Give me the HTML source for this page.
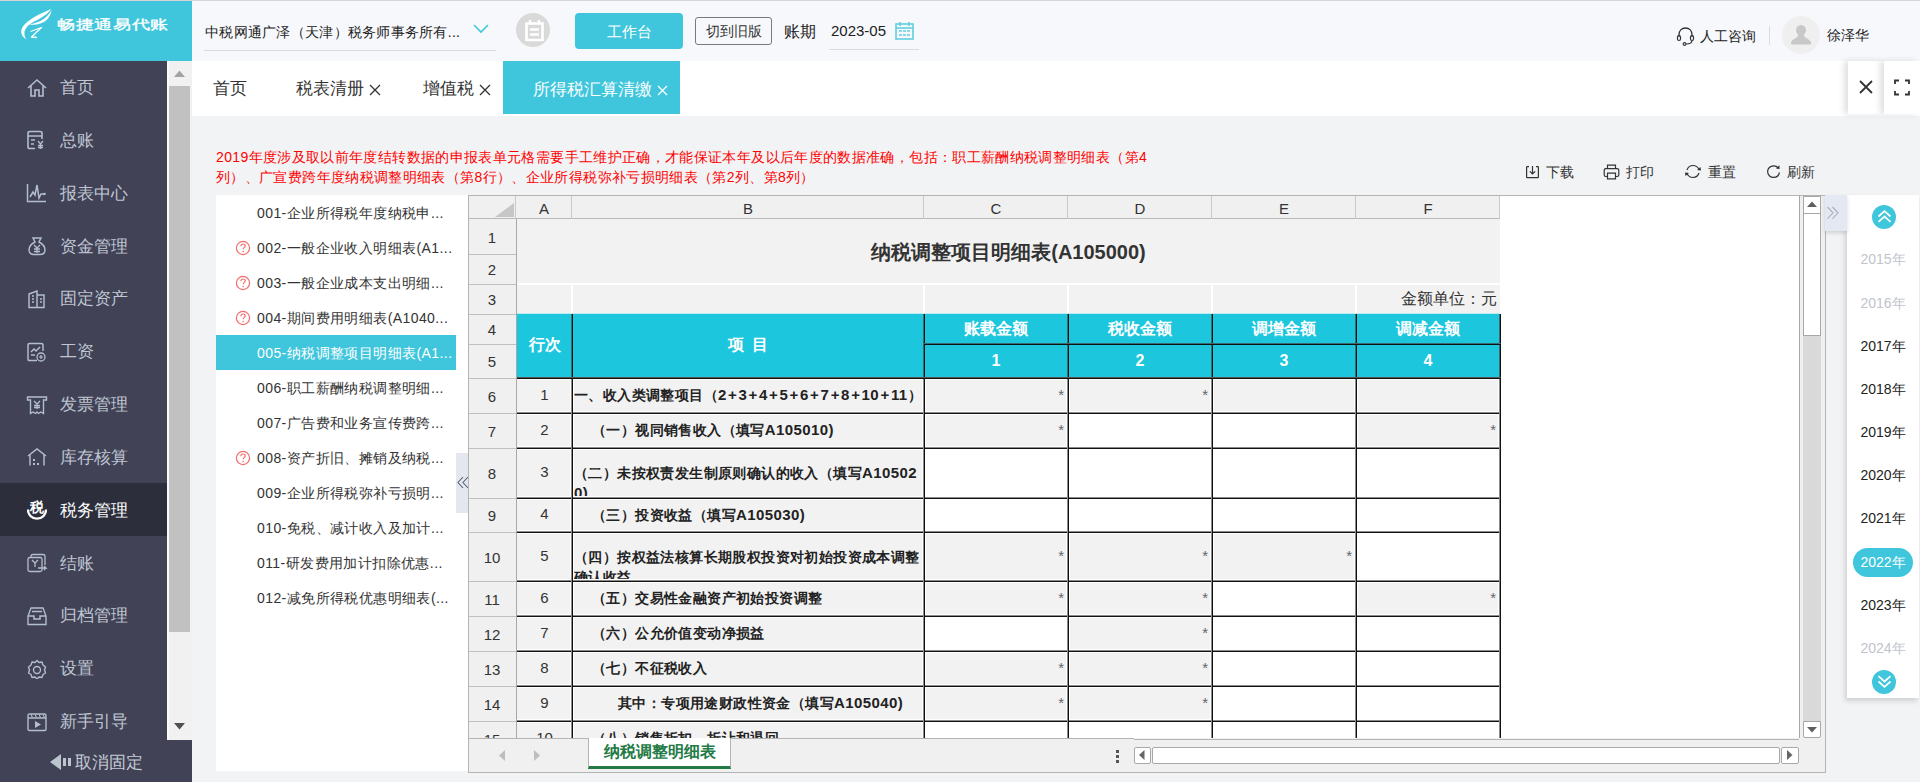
<!DOCTYPE html>
<html><head><meta charset="utf-8"><style>
html,body{margin:0;padding:0;width:1920px;height:782px;overflow:hidden;position:relative;font-family:'Liberation Sans',sans-serif;}
div{box-sizing:content-box}
svg{display:block}
</style></head><body>
<div style="position:absolute;left:0px;top:0px;width:1920px;height:782px;background:#f2f3f5"></div>
<div style="position:absolute;left:0px;top:0px;width:1920px;height:61px;background:#f7f8fc"></div>
<div style="position:absolute;left:0px;top:0px;width:1920px;height:1px;background:#d6d6d6"></div>
<div style="position:absolute;left:0px;top:1px;width:192px;height:60px;background:#40c6dc"></div>
<svg style="position:absolute;left:0px;top:0px" width="60" height="45" viewBox="0 0 60 45"><path d="M51.2 8.9 C44 12 32 17 25 24 C20 29 19.5 35 26.4 39.6 C23 34 24 29 29 25 C35 20 46 17 51.2 8.9 Z" fill="#fff"/><path d="M51.5 10 C50.5 19 43 26 29 24.5 C40 22.5 47.5 18 51.5 10 Z" fill="#fff"/><path d="M30.5 31.5 L41.5 27.5 L31.5 37 L37 37.5" stroke="#fff" stroke-width="1.3" fill="none" stroke-linejoin="round"/></svg>
<div style="position:absolute;left:57px;top:13.30px;font-size:18px;line-height:24px;color:#fff;font-weight:normal;white-space:nowrap;transform:scaleY(0.72);transform-origin:0 50%;letter-spacing:0.7px;-webkit-text-stroke:0.5px #fff">畅捷通易代账</div>
<div style="position:absolute;left:205px;top:22.00px;font-size:14px;line-height:20px;color:#222;font-weight:normal;white-space:nowrap;letter-spacing:0.28px">中税网通广泽（天津）税务师事务所有...</div>
<svg style="position:absolute;left:473px;top:24px" width="16" height="10" viewBox="0 0 16 10"><path d="M1 1 L8 8 L15 1" stroke="#40c6dc" stroke-width="1.6" fill="none"/></svg>
<div style="position:absolute;left:204px;top:50px;width:292px;height:1px;background:#d9dbe0"></div>
<div style="position:absolute;left:516px;top:13px;width:34px;height:34px;border-radius:50%;background:#d9d9d9"></div>
<svg style="position:absolute;left:524px;top:19px" width="21" height="23" viewBox="0 0 21 23"><path d="M2.5 4.5 H18.5 V21 H2.5 Z" stroke="#fff" stroke-width="2.6" fill="none"/><path d="M6 1 V5 M15 1 V5" stroke="#fff" stroke-width="2.4"/><path d="M6 10.5 H15 M6 15.5 H15" stroke="#fff" stroke-width="2.4"/></svg>
<div style="position:absolute;left:575px;top:13px;width:108px;height:36px;border-radius:4px;background:#40c6dc"></div>
<div style="position:absolute;left:575px;width:108px;text-align:center;top:20.50px;font-size:15px;line-height:21px;color:#fff;font-weight:normal;white-space:nowrap;">工作台</div>
<div style="position:absolute;left:695px;top:17px;width:75px;height:26px;border-radius:3px;border:1px solid #7a7a7a;background:transparent"></div>
<div style="position:absolute;left:695px;width:77px;text-align:center;top:21.00px;font-size:14px;line-height:20px;color:#333;font-weight:normal;white-space:nowrap;">切到旧版</div>
<div style="position:absolute;left:784px;top:21.00px;font-size:16px;line-height:22px;color:#222;font-weight:normal;white-space:nowrap;">账期</div>
<div style="position:absolute;left:831px;top:20.00px;font-size:15px;line-height:21px;color:#222;font-weight:normal;white-space:nowrap;">2023-05</div>
<svg style="position:absolute;left:895px;top:21px" width="19" height="19" viewBox="0 0 19 19"><rect x="1" y="3" width="17" height="15" fill="none" stroke="#5fcfe0" stroke-width="1.6"/><path d="M5 1 V5 M14 1 V5" stroke="#5fcfe0" stroke-width="1.6"/><path d="M1 7 H18" stroke="#5fcfe0" stroke-width="1.6"/><path d="M4 10 H7 M8 10 H11 M12 10 H15 M4 14 H7 M8 14 H11 M12 14 H15" stroke="#5fcfe0" stroke-width="1.4"/></svg>
<div style="position:absolute;left:829px;top:49px;width:90px;height:1px;background:#d9dbe0"></div>
<svg style="position:absolute;left:1676px;top:26px" width="19" height="20" viewBox="0 0 19 20"><path d="M3 11 V9 C3 4.5 6 2 9.5 2 C13 2 16 4.5 16 9 V11" stroke="#333" stroke-width="1.3" fill="none"/><rect x="1.5" y="9.5" width="3" height="5" rx="1.5" fill="none" stroke="#333" stroke-width="1.2"/><rect x="14.5" y="9.5" width="3" height="5" rx="1.5" fill="none" stroke="#333" stroke-width="1.2"/><path d="M16 14.5 C16 17 13 18 10 18" stroke="#333" stroke-width="1.2" fill="none"/><circle cx="8.5" cy="18" r="1.4" fill="none" stroke="#333" stroke-width="1.1"/></svg>
<div style="position:absolute;left:1700px;top:25.50px;font-size:14px;line-height:20px;color:#222;font-weight:normal;white-space:nowrap;">人工咨询</div>
<div style="position:absolute;left:1769px;top:26px;width:1px;height:19px;background:#dcdcdc"></div>
<div style="position:absolute;left:1782px;top:16px;width:38px;height:38px;border-radius:50%;background:#efefef"></div>
<svg style="position:absolute;left:1790px;top:24px" width="22" height="22" viewBox="0 0 22 22"><ellipse cx="11" cy="6.3" rx="5" ry="5.4" fill="#c8c8c8"/><path d="M8 10.5 H14 L14.5 13 C17.5 14.8 21 16.5 21 19 C21 20.2 20.5 20.6 19.5 20.6 H2.5 C1.5 20.6 1 20.2 1 19 C1 16.5 4.5 14.8 7.5 13 Z" fill="#c8c8c8"/></svg>
<div style="position:absolute;left:1827px;top:25.00px;font-size:14px;line-height:20px;color:#222;font-weight:normal;white-space:nowrap;">徐泽华</div>
<div style="position:absolute;left:0px;top:61px;width:167px;height:679px;background:#424257"></div>
<div style="position:absolute;left:0px;top:740px;width:192px;height:42px;background:#424257"></div>
<div style="position:absolute;left:167px;top:61px;width:25px;height:679px;background:#f1f1f1"></div>
<div style="position:absolute;left:167px;top:61px;width:2px;height:679px;background:#fafafa"></div>
<div style="position:absolute;left:169px;top:86px;width:21px;height:546px;background:#c1c1c1"></div>
<svg style="position:absolute;left:174px;top:70px" width="11" height="7" viewBox="0 0 11 7"><path d="M0 7 L5.5 0.5 L11 7 Z" fill="#a3a3a3"/></svg>
<svg style="position:absolute;left:174px;top:723px" width="11" height="7" viewBox="0 0 11 7"><path d="M0 0 L5.5 6.5 L11 0 Z" fill="#505050"/></svg>
<div style="position:absolute;left:60px;top:76.10px;font-size:17px;line-height:23px;color:#bfc7d2;font-weight:normal;white-space:nowrap;">首页</div>
<div style="position:absolute;left:60px;top:128.93px;font-size:17px;line-height:23px;color:#bfc7d2;font-weight:normal;white-space:nowrap;">总账</div>
<div style="position:absolute;left:60px;top:181.76px;font-size:17px;line-height:23px;color:#bfc7d2;font-weight:normal;white-space:nowrap;">报表中心</div>
<div style="position:absolute;left:60px;top:234.59px;font-size:17px;line-height:23px;color:#bfc7d2;font-weight:normal;white-space:nowrap;">资金管理</div>
<div style="position:absolute;left:60px;top:287.42px;font-size:17px;line-height:23px;color:#bfc7d2;font-weight:normal;white-space:nowrap;">固定资产</div>
<div style="position:absolute;left:60px;top:340.25px;font-size:17px;line-height:23px;color:#bfc7d2;font-weight:normal;white-space:nowrap;">工资</div>
<div style="position:absolute;left:60px;top:393.08px;font-size:17px;line-height:23px;color:#bfc7d2;font-weight:normal;white-space:nowrap;">发票管理</div>
<div style="position:absolute;left:60px;top:445.91px;font-size:17px;line-height:23px;color:#bfc7d2;font-weight:normal;white-space:nowrap;">库存核算</div>
<div style="position:absolute;left:0px;top:483px;width:167px;height:53px;background:#2c2e3b"></div>
<div style="position:absolute;left:60px;top:498.74px;font-size:17px;line-height:23px;color:#fff;font-weight:normal;white-space:nowrap;">税务管理</div>
<div style="position:absolute;left:60px;top:551.57px;font-size:17px;line-height:23px;color:#bfc7d2;font-weight:normal;white-space:nowrap;">结账</div>
<div style="position:absolute;left:60px;top:604.40px;font-size:17px;line-height:23px;color:#bfc7d2;font-weight:normal;white-space:nowrap;">归档管理</div>
<div style="position:absolute;left:60px;top:657.23px;font-size:17px;line-height:23px;color:#bfc7d2;font-weight:normal;white-space:nowrap;">设置</div>
<div style="position:absolute;left:60px;top:710.06px;font-size:17px;line-height:23px;color:#bfc7d2;font-weight:normal;white-space:nowrap;">新手引导</div>
<svg style="position:absolute;left:26px;top:78px" width="22" height="20" viewBox="0 0 22 20"><path d="M2 10 L11 2 L20 10" stroke="#b4bfcc" stroke-width="1.6" fill="none"/><path d="M5 8 V18 H9 V12 H13 V18 H17 V8" stroke="#b4bfcc" stroke-width="1.6" fill="none"/></svg>
<svg style="position:absolute;left:26px;top:130px" width="22" height="20" viewBox="0 0 22 20"><path d="M16 9 V3 C16 2 15 1.5 14 1.5 H4 C3 1.5 2 2 2 3 V17 C2 18 3 18.5 4 18.5 H9" stroke="#b4bfcc" stroke-width="1.6" fill="none"/><path d="M2 6 H16 M5 10 H9 M5 14 H8" stroke="#b4bfcc" stroke-width="1.44"/><path d="M12 11 L14.5 14 L17 11 M14.5 14 V19 M12 15.5 H17 M12 17.5 H17" stroke="#b4bfcc" stroke-width="1.3" fill="none"/></svg>
<svg style="position:absolute;left:26px;top:183px" width="22" height="20" viewBox="0 0 22 20"><path d="M1.5 1 V18.5 H20" stroke="#b4bfcc" stroke-width="1.44" fill="none"/><path d="M4 14 L7 9 L9 12 L11 2 L13 15 L15 11 L18 11" stroke="#b4bfcc" stroke-width="1.5" fill="none"/><circle cx="18.5" cy="11" r="1.3" fill="#b4bfcc"/></svg>
<svg style="position:absolute;left:26px;top:236px" width="22" height="20" viewBox="0 0 22 20"><path d="M7 2 H15 L13 6 C17 8 19 11 19 14 C19 17 17 18.5 14 18.5 H8 C5 18.5 3 17 3 14 C3 11 5 8 9 6 Z" stroke="#b4bfcc" stroke-width="1.44" fill="none"/><path d="M8 9 L11 12 L14 9 M11 12 V17 M8 13 H14 M8 15.5 H14" stroke="#b4bfcc" stroke-width="1.3" fill="none"/></svg>
<svg style="position:absolute;left:26px;top:289px" width="22" height="20" viewBox="0 0 22 20"><path d="M3 5 L11 2 V18.5 H3 Z M11 6 H18 V18.5 H11" stroke="#b4bfcc" stroke-width="1.44" fill="none"/><path d="M6 7 H8 M6 10 H8 M6 13 H8 M14 10 H16 M14 13 H16" stroke="#b4bfcc" stroke-width="1.5"/></svg>
<svg style="position:absolute;left:26px;top:342px" width="22" height="20" viewBox="0 0 22 20"><path d="M11 18.5 H3.5 C2.5 18.5 2 18 2 17 V3 C2 2 2.5 1.5 3.5 1.5 H15 C16 1.5 17 2 17 3 V9" stroke="#b4bfcc" stroke-width="1.44" fill="none"/><path d="M5 10 L8 7 L10 9 L14 5" stroke="#b4bfcc" stroke-width="1.5" fill="none"/><path d="M5 13 H9" stroke="#b4bfcc" stroke-width="1.5"/><circle cx="15" cy="15" r="4" stroke="#b4bfcc" stroke-width="1.28" fill="none"/><path d="M13 15 H17 M15 13 V17" stroke="#b4bfcc" stroke-width="1.2"/></svg>
<svg style="position:absolute;left:26px;top:395px" width="22" height="20" viewBox="0 0 22 20"><path d="M1.5 2 H20.5 V5 H17.5 V18.5 L15 17 L12.5 18.5 L11 17 L9.5 18.5 L7 17 L4.5 18.5 V5 H1.5 Z" stroke="#b4bfcc" stroke-width="1.36" fill="none"/><path d="M8 6 L11 9 L14 6 M11 9 V14 M8 10.5 H14 M8 12.5 H14" stroke="#b4bfcc" stroke-width="1.3" fill="none"/></svg>
<svg style="position:absolute;left:26px;top:447px" width="22" height="20" viewBox="0 0 22 20"><path d="M2 9 L11 2 L20 9" stroke="#b4bfcc" stroke-width="1.44" fill="none"/><path d="M4 8 V18.5 M18 8 V18.5" stroke="#b4bfcc" stroke-width="1.44"/><path d="M7 12 H9 V14 H7 Z M7 16 H9 V18 H7 Z M11 16 H13 V18 H11 Z" fill="#b4bfcc"/></svg>
<svg style="position:absolute;left:26px;top:500px" width="22" height="20" viewBox="0 0 22 20"><path d="M2 9.5 C2 15 6 18.6 11 18.6 C16 18.6 20 15 20 9.5" stroke="#fff" stroke-width="2.2" fill="none"/><text x="11" y="12" font-size="14" font-weight="bold" fill="#fff" text-anchor="middle" font-family="Liberation Sans">税</text></svg>
<svg style="position:absolute;left:26px;top:553px" width="22" height="20" viewBox="0 0 22 20"><path d="M5 4 V3 C5 2 6 1.5 7 1.5 H17 C18 1.5 19 2 19 3 V12" stroke="#b4bfcc" stroke-width="1.28" fill="none"/><path d="M2 6 C2 5 3 4.5 4 4.5 H14 C15 4.5 16 5 16 6 V17 C16 18 15 18.5 14 18.5 H4 C3 18.5 2 18 2 17 Z" stroke="#b4bfcc" stroke-width="1.28" fill="none"/><path d="M6 7 L9 10 L12 7 M9 10 V14" stroke="#b4bfcc" stroke-width="1.3" fill="none"/><path d="M12 15 H20 L18 13 M20 15 L18 17" stroke="#b4bfcc" stroke-width="1.3" fill="none"/></svg>
<svg style="position:absolute;left:26px;top:606px" width="22" height="20" viewBox="0 0 22 20"><path d="M2 10 L5 2 H17 L20 10 V18.5 H2 Z" stroke="#b4bfcc" stroke-width="1.36" fill="none"/><path d="M2 10 H8 V13 H14 V10 H20 M6 5.5 H16" stroke="#b4bfcc" stroke-width="1.5" fill="none"/></svg>
<svg style="position:absolute;left:26px;top:659px" width="22" height="20" viewBox="0 0 22 20"><path d="M11 1.5 L13 3.5 L16 3 L17 6 L19.5 8 L18.5 11 L19.5 14 L17 15.5 L16 18.5 L13 18 L11 20 L9 18 L6 18.5 L5 15.5 L2.5 14 L3.5 11 L2.5 8 L5 6 L6 3 L9 3.5 Z" stroke="#b4bfcc" stroke-width="1.36" fill="none" stroke-linejoin="round"/><circle cx="11" cy="11" r="3.5" stroke="#b4bfcc" stroke-width="1.36" fill="none"/></svg>
<svg style="position:absolute;left:26px;top:712px" width="22" height="20" viewBox="0 0 22 20"><rect x="2" y="2" width="18" height="16.5" rx="1.5" stroke="#b4bfcc" stroke-width="1.36" fill="none"/><path d="M2 6 H20" stroke="#b4bfcc" stroke-width="1.5"/><path d="M5 2.5 L6.5 5.5 M9 2.5 L10.5 5.5 M13 2.5 L14.5 5.5 M17 2.5 L18.5 5.5" stroke="#b4bfcc" stroke-width="1.1"/><path d="M9 9 L15 12.5 L9 16 Z" fill="#b4bfcc"/></svg>
<svg style="position:absolute;left:50px;top:753px" width="22" height="18" viewBox="0 0 22 18"><path d="M0 9 L11 1 V17 Z" fill="#bcc4cf"/><rect x="13" y="5" width="3" height="8" fill="#bcc4cf"/><rect x="18" y="5" width="3" height="8" fill="#bcc4cf"/></svg>
<div style="position:absolute;left:75px;top:750.50px;font-size:17px;line-height:23px;color:#c4ccd6;font-weight:normal;white-space:nowrap;">取消固定</div>
<div style="position:absolute;left:192px;top:61px;width:1728px;height:55px;background:#fff"></div>
<div style="position:absolute;left:213px;top:77.00px;font-size:17px;line-height:23px;color:#333;font-weight:normal;white-space:nowrap;">首页</div>
<div style="position:absolute;left:296px;top:77.00px;font-size:17px;line-height:23px;color:#333;font-weight:normal;white-space:nowrap;">税表清册</div>
<div style="position:absolute;left:423px;top:77.00px;font-size:17px;line-height:23px;color:#333;font-weight:normal;white-space:nowrap;">增值税</div>
<svg style="position:absolute;left:369px;top:84px" width="12" height="12" viewBox="0 0 12 12"><path d="M1 1 L11 11 M11 1 L1 11" stroke="#333" stroke-width="1.3"/></svg>
<svg style="position:absolute;left:479px;top:84px" width="12" height="12" viewBox="0 0 12 12"><path d="M1 1 L11 11 M11 1 L1 11" stroke="#333" stroke-width="1.3"/></svg>
<div style="position:absolute;left:503px;top:61px;width:177px;height:53px;background:#40c6dc"></div>
<div style="position:absolute;left:533px;top:77.50px;font-size:17px;line-height:23px;color:#fff;font-weight:normal;white-space:nowrap;">所得税汇算清缴</div>
<svg style="position:absolute;left:657px;top:85px" width="11" height="11" viewBox="0 0 11 11"><path d="M1 1 L10 10 M10 1 L1 10" stroke="#fff" stroke-width="1.3"/></svg>
<div style="position:absolute;left:1848px;top:61px;width:36px;height:53px;background:#fff;box-shadow:-4px 0 6px rgba(0,0,0,0.12)"></div>
<div style="position:absolute;left:1884px;top:61px;width:36px;height:53px;background:#fff;box-shadow:-4px 0 6px rgba(0,0,0,0.12)"></div>
<svg style="position:absolute;left:1859px;top:80px" width="14" height="14" viewBox="0 0 14 14"><path d="M1 1 L13 13 M13 1 L1 13" stroke="#333" stroke-width="1.8"/></svg>
<svg style="position:absolute;left:1894px;top:79px" width="16" height="17" viewBox="0 0 16 17"><path d="M1 5 V1.5 H5 M11 1.5 H15 V5 M15 12 V15.5 H11 M5 15.5 H1 V12" stroke="#333" stroke-width="1.8" fill="none"/></svg>
<div style="position:absolute;left:216px;top:147.00px;font-size:14px;line-height:20px;color:#ff0000;font-weight:normal;white-space:nowrap;letter-spacing:0.36px">2019年度涉及取以前年度结转数据的申报表单元格需要手工维护正确，才能保证本年及以后年度的数据准确，包括：职工薪酬纳税调整明细表（第4</div>
<div style="position:absolute;left:216px;top:166.50px;font-size:14px;line-height:20px;color:#ff0000;font-weight:normal;white-space:nowrap;letter-spacing:0.36px">列）、广宣费跨年度纳税调整明细表（第8行）、企业所得税弥补亏损明细表（第2列、第8列）</div>
<svg style="position:absolute;left:1525px;top:165px" width="15" height="14" viewBox="0 0 15 14"><path d="M4 1.6 H2.2 C1.8 1.6 1.6 1.8 1.6 2.2 V12 C1.6 12.4 1.8 12.6 2.2 12.6 H12.8 C13.2 12.6 13.4 12.4 13.4 12 V2.2 C13.4 1.8 13.2 1.6 12.8 1.6 H11" stroke="#333" stroke-width="1.2" fill="none"/><path d="M7.5 1 V9 M4.8 6.3 L7.5 9 L10.2 6.3" stroke="#333" stroke-width="1.2" fill="none"/></svg>
<div style="position:absolute;left:1546px;top:162.00px;font-size:14px;line-height:20px;color:#333;font-weight:normal;white-space:nowrap;">下载</div>
<svg style="position:absolute;left:1603px;top:164px" width="17" height="16" viewBox="0 0 17 16"><path d="M4.5 4.5 V1.2 H12.5 V4.5" stroke="#333" stroke-width="1.2" fill="none"/><path d="M4 12.5 H2.8 C1.8 12.5 1.2 11.8 1.2 10.8 V6.3 C1.2 5.3 1.8 4.6 2.8 4.6 H14.2 C15.2 4.6 15.8 5.3 15.8 6.3 V10.8 C15.8 11.8 15.2 12.5 14.2 12.5 H13" stroke="#333" stroke-width="1.2" fill="none"/><path d="M4.5 9.2 H12.5 V14.8 H4.5 Z" stroke="#333" stroke-width="1.2" fill="none"/></svg>
<div style="position:absolute;left:1626px;top:162.00px;font-size:14px;line-height:20px;color:#333;font-weight:normal;white-space:nowrap;">打印</div>
<svg style="position:absolute;left:1684px;top:163px" width="18" height="17" viewBox="0 0 18 17"><path d="M3 7 C4 4 6 2.5 9 2.5 C12 2.5 14 4 15.5 7" stroke="#333" stroke-width="1.2" fill="none"/><path d="M15 10 C14 13 12 14.5 9 14.5 C6 14.5 4 13 2.5 10" stroke="#333" stroke-width="1.2" fill="none"/><path d="M13 7 L17 7.5 L16.5 4 Z M5 10 L1 9.5 L1.5 13 Z" fill="#333"/></svg>
<div style="position:absolute;left:1708px;top:162.00px;font-size:14px;line-height:20px;color:#333;font-weight:normal;white-space:nowrap;">重置</div>
<svg style="position:absolute;left:1766px;top:164px" width="15" height="15" viewBox="0 0 15 15"><path d="M12.3 4 C11 2.5 9.5 1.8 7.5 1.8 C4.2 1.8 1.6 4.4 1.6 7.6 C1.6 10.8 4.2 13.4 7.5 13.4 C10.5 13.4 13 11.3 13.4 8.4" stroke="#333" stroke-width="1.2" fill="none"/><path d="M10 4.6 L13.6 5 L13.4 1.2 Z" fill="#333"/></svg>
<div style="position:absolute;left:1787px;top:162.00px;font-size:14px;line-height:20px;color:#333;font-weight:normal;white-space:nowrap;">刷新</div>
<div style="position:absolute;left:216px;top:195px;width:252px;height:576px;background:#fff"></div>
<div style="position:absolute;left:257px;top:202.50px;font-size:14px;line-height:20px;color:#333;font-weight:normal;white-space:nowrap;letter-spacing:0.42px">001-企业所得税年度纳税申...</div>
<div style="position:absolute;left:257px;top:237.50px;font-size:14px;line-height:20px;color:#333;font-weight:normal;white-space:nowrap;letter-spacing:0.42px">002-一般企业收入明细表(A1...</div>
<svg style="position:absolute;left:235px;top:240px" width="16" height="16" viewBox="0 0 16 16"><circle cx="8" cy="8" r="6.6" stroke="#f56c6c" stroke-width="1.2" fill="none"/><path d="M5.8 6.2 C5.8 4.8 6.8 4 8 4 C9.3 4 10.2 4.8 10.2 6 C10.2 7.3 8.2 7.6 8.2 9.3" stroke="#f56c6c" stroke-width="1.2" fill="none"/><circle cx="8.1" cy="11.6" r="0.8" fill="#f56c6c"/></svg>
<div style="position:absolute;left:257px;top:272.50px;font-size:14px;line-height:20px;color:#333;font-weight:normal;white-space:nowrap;letter-spacing:0.42px">003-一般企业成本支出明细...</div>
<svg style="position:absolute;left:235px;top:275px" width="16" height="16" viewBox="0 0 16 16"><circle cx="8" cy="8" r="6.6" stroke="#f56c6c" stroke-width="1.2" fill="none"/><path d="M5.8 6.2 C5.8 4.8 6.8 4 8 4 C9.3 4 10.2 4.8 10.2 6 C10.2 7.3 8.2 7.6 8.2 9.3" stroke="#f56c6c" stroke-width="1.2" fill="none"/><circle cx="8.1" cy="11.6" r="0.8" fill="#f56c6c"/></svg>
<div style="position:absolute;left:257px;top:307.50px;font-size:14px;line-height:20px;color:#333;font-weight:normal;white-space:nowrap;letter-spacing:0.42px">004-期间费用明细表(A1040...</div>
<svg style="position:absolute;left:235px;top:310px" width="16" height="16" viewBox="0 0 16 16"><circle cx="8" cy="8" r="6.6" stroke="#f56c6c" stroke-width="1.2" fill="none"/><path d="M5.8 6.2 C5.8 4.8 6.8 4 8 4 C9.3 4 10.2 4.8 10.2 6 C10.2 7.3 8.2 7.6 8.2 9.3" stroke="#f56c6c" stroke-width="1.2" fill="none"/><circle cx="8.1" cy="11.6" r="0.8" fill="#f56c6c"/></svg>
<div style="position:absolute;left:216px;top:335px;width:240px;height:35px;background:#40c6dc"></div>
<div style="position:absolute;left:257px;top:342.50px;font-size:14px;line-height:20px;color:#fff;font-weight:normal;white-space:nowrap;letter-spacing:0.42px">005-纳税调整项目明细表(A1...</div>
<div style="position:absolute;left:257px;top:377.50px;font-size:14px;line-height:20px;color:#333;font-weight:normal;white-space:nowrap;letter-spacing:0.42px">006-职工薪酬纳税调整明细...</div>
<div style="position:absolute;left:257px;top:412.50px;font-size:14px;line-height:20px;color:#333;font-weight:normal;white-space:nowrap;letter-spacing:0.42px">007-广告费和业务宣传费跨...</div>
<div style="position:absolute;left:257px;top:447.50px;font-size:14px;line-height:20px;color:#333;font-weight:normal;white-space:nowrap;letter-spacing:0.42px">008-资产折旧、摊销及纳税...</div>
<svg style="position:absolute;left:235px;top:450px" width="16" height="16" viewBox="0 0 16 16"><circle cx="8" cy="8" r="6.6" stroke="#f56c6c" stroke-width="1.2" fill="none"/><path d="M5.8 6.2 C5.8 4.8 6.8 4 8 4 C9.3 4 10.2 4.8 10.2 6 C10.2 7.3 8.2 7.6 8.2 9.3" stroke="#f56c6c" stroke-width="1.2" fill="none"/><circle cx="8.1" cy="11.6" r="0.8" fill="#f56c6c"/></svg>
<div style="position:absolute;left:257px;top:482.50px;font-size:14px;line-height:20px;color:#333;font-weight:normal;white-space:nowrap;letter-spacing:0.42px">009-企业所得税弥补亏损明...</div>
<div style="position:absolute;left:257px;top:517.50px;font-size:14px;line-height:20px;color:#333;font-weight:normal;white-space:nowrap;letter-spacing:0.42px">010-免税、减计收入及加计...</div>
<div style="position:absolute;left:257px;top:552.50px;font-size:14px;line-height:20px;color:#333;font-weight:normal;white-space:nowrap;letter-spacing:0.42px">011-研发费用加计扣除优惠...</div>
<div style="position:absolute;left:257px;top:587.50px;font-size:14px;line-height:20px;color:#333;font-weight:normal;white-space:nowrap;letter-spacing:0.42px">012-减免所得税优惠明细表(...</div>
<div style="position:absolute;left:456px;top:453px;width:12px;height:60px;background:#e4e7ed"></div>
<svg style="position:absolute;left:457px;top:476px" width="12" height="13" viewBox="0 0 12 13"><path d="M6 1 L1 6.5 L6 12 M11 1 L6 6.5 L11 12" stroke="#55627a" stroke-width="1.1" fill="none"/></svg>
<div style="position:absolute;left:468px;top:195px;width:1358px;height:578px;background:#f0f0f0;box-sizing:border-box;border:1px solid #b4b4b4"></div>
<div style="position:absolute;left:469px;top:219px;width:1331px;height:519px;background:#fff"></div>
<div style="position:absolute;left:469px;top:196px;width:1331px;height:23px;background:#fff"></div>
<div style="position:absolute;left:469px;top:196px;width:1031px;height:23px;background:#f0f0f0"></div>
<div style="position:absolute;left:469px;top:218px;width:1031px;height:1px;background:#b9b9b9"></div>
<svg style="position:absolute;left:495px;top:203px" width="19" height="14" viewBox="0 0 19 14"><path d="M19 0 V14 H0 Z" fill="#c6c6c6"/></svg>
<div style="position:absolute;left:516px;width:56px;text-align:center;top:197.50px;font-size:15px;line-height:21px;color:#333;font-weight:normal;white-space:nowrap;">A</div>
<div style="position:absolute;left:571px;top:196px;width:1px;height:23px;background:#c9c9c9"></div>
<div style="position:absolute;left:572px;width:352px;text-align:center;top:197.50px;font-size:15px;line-height:21px;color:#333;font-weight:normal;white-space:nowrap;">B</div>
<div style="position:absolute;left:923px;top:196px;width:1px;height:23px;background:#c9c9c9"></div>
<div style="position:absolute;left:924px;width:144px;text-align:center;top:197.50px;font-size:15px;line-height:21px;color:#333;font-weight:normal;white-space:nowrap;">C</div>
<div style="position:absolute;left:1067px;top:196px;width:1px;height:23px;background:#c9c9c9"></div>
<div style="position:absolute;left:1068px;width:144px;text-align:center;top:197.50px;font-size:15px;line-height:21px;color:#333;font-weight:normal;white-space:nowrap;">D</div>
<div style="position:absolute;left:1211px;top:196px;width:1px;height:23px;background:#c9c9c9"></div>
<div style="position:absolute;left:1212px;width:144px;text-align:center;top:197.50px;font-size:15px;line-height:21px;color:#333;font-weight:normal;white-space:nowrap;">E</div>
<div style="position:absolute;left:1355px;top:196px;width:1px;height:23px;background:#c9c9c9"></div>
<div style="position:absolute;left:1356px;width:144px;text-align:center;top:197.50px;font-size:15px;line-height:21px;color:#333;font-weight:normal;white-space:nowrap;">F</div>
<div style="position:absolute;left:1499px;top:196px;width:1px;height:23px;background:#c9c9c9"></div>
<div style="position:absolute;left:515px;top:196px;width:1px;height:23px;background:#c9c9c9"></div>
<div style="position:absolute;left:469px;top:219px;width:47px;height:519px;background:#f0f0f0;overflow:hidden"></div>
<div style="position:absolute;left:516px;top:219px;width:1px;height:519px;background:#a8a8a8"></div>
<div style="position:absolute;left:469px;top:219px;width:46px;height:35px;overflow:hidden">
<div style="position:absolute;left:0;top:8.8px;width:46px;text-align:center;font-size:15px;line-height:20px;color:#333">1</div></div>
<div style="position:absolute;left:469px;top:254px;width:47px;height:1px;background:#c0c0c0"></div>
<div style="position:absolute;left:469px;top:254px;width:46px;height:30px;overflow:hidden">
<div style="position:absolute;left:0;top:6.3px;width:46px;text-align:center;font-size:15px;line-height:20px;color:#333">2</div></div>
<div style="position:absolute;left:469px;top:284px;width:47px;height:1px;background:#c0c0c0"></div>
<div style="position:absolute;left:469px;top:284px;width:46px;height:30px;overflow:hidden">
<div style="position:absolute;left:0;top:6.3px;width:46px;text-align:center;font-size:15px;line-height:20px;color:#333">3</div></div>
<div style="position:absolute;left:469px;top:314px;width:47px;height:1px;background:#c0c0c0"></div>
<div style="position:absolute;left:469px;top:314px;width:46px;height:30px;overflow:hidden">
<div style="position:absolute;left:0;top:6.3px;width:46px;text-align:center;font-size:15px;line-height:20px;color:#333">4</div></div>
<div style="position:absolute;left:469px;top:344px;width:47px;height:1px;background:#c0c0c0"></div>
<div style="position:absolute;left:469px;top:344px;width:46px;height:34px;overflow:hidden">
<div style="position:absolute;left:0;top:8.3px;width:46px;text-align:center;font-size:15px;line-height:20px;color:#333">5</div></div>
<div style="position:absolute;left:469px;top:378px;width:47px;height:1px;background:#c0c0c0"></div>
<div style="position:absolute;left:469px;top:378px;width:46px;height:35px;overflow:hidden">
<div style="position:absolute;left:0;top:8.8px;width:46px;text-align:center;font-size:15px;line-height:20px;color:#333">6</div></div>
<div style="position:absolute;left:469px;top:413px;width:47px;height:1px;background:#c0c0c0"></div>
<div style="position:absolute;left:469px;top:413px;width:46px;height:35px;overflow:hidden">
<div style="position:absolute;left:0;top:8.8px;width:46px;text-align:center;font-size:15px;line-height:20px;color:#333">7</div></div>
<div style="position:absolute;left:469px;top:448px;width:47px;height:1px;background:#c0c0c0"></div>
<div style="position:absolute;left:469px;top:448px;width:46px;height:50px;overflow:hidden">
<div style="position:absolute;left:0;top:16.3px;width:46px;text-align:center;font-size:15px;line-height:20px;color:#333">8</div></div>
<div style="position:absolute;left:469px;top:498px;width:47px;height:1px;background:#c0c0c0"></div>
<div style="position:absolute;left:469px;top:498px;width:46px;height:34px;overflow:hidden">
<div style="position:absolute;left:0;top:8.3px;width:46px;text-align:center;font-size:15px;line-height:20px;color:#333">9</div></div>
<div style="position:absolute;left:469px;top:532px;width:47px;height:1px;background:#c0c0c0"></div>
<div style="position:absolute;left:469px;top:532px;width:46px;height:49px;overflow:hidden">
<div style="position:absolute;left:0;top:15.8px;width:46px;text-align:center;font-size:15px;line-height:20px;color:#333">10</div></div>
<div style="position:absolute;left:469px;top:581px;width:47px;height:1px;background:#c0c0c0"></div>
<div style="position:absolute;left:469px;top:581px;width:46px;height:35px;overflow:hidden">
<div style="position:absolute;left:0;top:8.8px;width:46px;text-align:center;font-size:15px;line-height:20px;color:#333">11</div></div>
<div style="position:absolute;left:469px;top:616px;width:47px;height:1px;background:#c0c0c0"></div>
<div style="position:absolute;left:469px;top:616px;width:46px;height:35px;overflow:hidden">
<div style="position:absolute;left:0;top:8.8px;width:46px;text-align:center;font-size:15px;line-height:20px;color:#333">12</div></div>
<div style="position:absolute;left:469px;top:651px;width:47px;height:1px;background:#c0c0c0"></div>
<div style="position:absolute;left:469px;top:651px;width:46px;height:35px;overflow:hidden">
<div style="position:absolute;left:0;top:8.8px;width:46px;text-align:center;font-size:15px;line-height:20px;color:#333">13</div></div>
<div style="position:absolute;left:469px;top:686px;width:47px;height:1px;background:#c0c0c0"></div>
<div style="position:absolute;left:469px;top:686px;width:46px;height:35px;overflow:hidden">
<div style="position:absolute;left:0;top:8.8px;width:46px;text-align:center;font-size:15px;line-height:20px;color:#333">14</div></div>
<div style="position:absolute;left:469px;top:721px;width:47px;height:1px;background:#c0c0c0"></div>
<div style="position:absolute;left:469px;top:721px;width:46px;height:17px;overflow:hidden">
<div style="position:absolute;left:0;top:8.8px;width:46px;text-align:center;font-size:15px;line-height:20px;color:#333">15</div></div>
<div style="position:absolute;left:517px;top:219px;width:983px;height:95px;background:#f2f2f2"></div>
<div style="position:absolute;left:571px;top:284px;width:2px;height:30px;background:#fff"></div>
<div style="position:absolute;left:923px;top:284px;width:2px;height:30px;background:#fff"></div>
<div style="position:absolute;left:1067px;top:284px;width:2px;height:30px;background:#fff"></div>
<div style="position:absolute;left:1211px;top:284px;width:2px;height:30px;background:#fff"></div>
<div style="position:absolute;left:1355px;top:284px;width:2px;height:30px;background:#fff"></div>
<div style="position:absolute;left:517px;top:283px;width:983px;height:2px;background:#fff"></div>
<div style="position:absolute;left:517px;width:983px;text-align:center;top:238.50px;font-size:20px;line-height:26px;color:#333;font-weight:bold;white-space:nowrap;">纳税调整项目明细表(A105000)</div>
<div style="position:absolute;right:423px;top:287.50px;font-size:16px;line-height:22px;color:#333;font-weight:normal;white-space:nowrap;text-align:right;">金额单位：元</div>
<div style="position:absolute;left:517px;top:314px;width:983px;height:64px;background:#1cc6dd"></div>
<div style="position:absolute;left:517px;top:313px;width:983px;height:1px;background:#bfeaf0"></div>
<div style="position:absolute;left:517px;width:55px;text-align:center;top:334.00px;font-size:16px;line-height:22px;color:#fff;font-weight:bold;white-space:nowrap;">行次</div>
<div style="position:absolute;left:572px;width:352px;text-align:center;top:334.00px;font-size:16px;line-height:22px;color:#fff;font-weight:bold;white-space:nowrap;">项&nbsp;&nbsp;目</div>
<div style="position:absolute;left:924px;width:144px;text-align:center;top:317.50px;font-size:16px;line-height:22px;color:#fff;font-weight:bold;white-space:nowrap;">账载金额</div>
<div style="position:absolute;left:924px;width:144px;text-align:center;top:350.00px;font-size:16px;line-height:22px;color:#fff;font-weight:bold;white-space:nowrap;">1</div>
<div style="position:absolute;left:1068px;width:144px;text-align:center;top:317.50px;font-size:16px;line-height:22px;color:#fff;font-weight:bold;white-space:nowrap;">税收金额</div>
<div style="position:absolute;left:1068px;width:144px;text-align:center;top:350.00px;font-size:16px;line-height:22px;color:#fff;font-weight:bold;white-space:nowrap;">2</div>
<div style="position:absolute;left:1212px;width:144px;text-align:center;top:317.50px;font-size:16px;line-height:22px;color:#fff;font-weight:bold;white-space:nowrap;">调增金额</div>
<div style="position:absolute;left:1212px;width:144px;text-align:center;top:350.00px;font-size:16px;line-height:22px;color:#fff;font-weight:bold;white-space:nowrap;">3</div>
<div style="position:absolute;left:1356px;width:144px;text-align:center;top:317.50px;font-size:16px;line-height:22px;color:#fff;font-weight:bold;white-space:nowrap;">调减金额</div>
<div style="position:absolute;left:1356px;width:144px;text-align:center;top:350.00px;font-size:16px;line-height:22px;color:#fff;font-weight:bold;white-space:nowrap;">4</div>
<div style="position:absolute;left:517px;top:378px;width:1283px;height:360px;overflow:hidden">
<div style="position:absolute;left:0px;top:0px;width:407px;height:35px;background:#f2f2f2"></div>
<div style="position:absolute;left:407px;top:0px;width:144px;height:35px;background:#f2f2f2"></div>
<div style="position:absolute;left:407px;top:7.0px;width:140px;height:20px;text-align:right;font-size:15px;line-height:20px;color:#666">*</div>
<div style="position:absolute;left:551px;top:0px;width:144px;height:35px;background:#f2f2f2"></div>
<div style="position:absolute;left:551px;top:7.0px;width:140px;height:20px;text-align:right;font-size:15px;line-height:20px;color:#666">*</div>
<div style="position:absolute;left:695px;top:0px;width:144px;height:35px;background:#f2f2f2"></div>
<div style="position:absolute;left:839px;top:0px;width:144px;height:35px;background:#f2f2f2"></div>
<div style="position:absolute;left:0px;top:6.5px;width:55px;height:20px;text-align:center;font-size:15px;line-height:20px;color:#333">1</div>
<div style="position:absolute;left:57px;top:7.0px;width:348px;height:20px;font-size:14px;line-height:20px;color:#222;font-weight:bold;white-space:nowrap;letter-spacing:0.4px">一、收入类调整项目（<span style="font-size:15px">2<span style="margin:0 1.3px">+</span>3<span style="margin:0 1.3px">+</span>4<span style="margin:0 1.3px">+</span>5<span style="margin:0 1.3px">+</span>6<span style="margin:0 1.3px">+</span>7<span style="margin:0 1.3px">+</span>8<span style="margin:0 1.3px">+</span>10<span style="margin:0 1.3px">+</span>11</span>）</div>
<div style="position:absolute;left:0px;top:35px;width:407px;height:35px;background:#f2f2f2"></div>
<div style="position:absolute;left:407px;top:35px;width:144px;height:35px;background:#f2f2f2"></div>
<div style="position:absolute;left:407px;top:42.0px;width:140px;height:20px;text-align:right;font-size:15px;line-height:20px;color:#666">*</div>
<div style="position:absolute;left:551px;top:35px;width:144px;height:35px;background:#fff"></div>
<div style="position:absolute;left:695px;top:35px;width:144px;height:35px;background:#fff"></div>
<div style="position:absolute;left:839px;top:35px;width:144px;height:35px;background:#f2f2f2"></div>
<div style="position:absolute;left:839px;top:42.0px;width:140px;height:20px;text-align:right;font-size:15px;line-height:20px;color:#666">*</div>
<div style="position:absolute;left:0px;top:41.5px;width:55px;height:20px;text-align:center;font-size:15px;line-height:20px;color:#333">2</div>
<div style="position:absolute;left:75px;top:42.0px;width:348px;height:20px;font-size:14px;line-height:20px;color:#222;font-weight:bold;white-space:nowrap;letter-spacing:0.4px">（一）视同销售收入（填写<span style="font-size:15px">A105010)</span></div>
<div style="position:absolute;left:0px;top:70px;width:407px;height:50px;background:#f2f2f2"></div>
<div style="position:absolute;left:407px;top:70px;width:144px;height:50px;background:#fff"></div>
<div style="position:absolute;left:551px;top:70px;width:144px;height:50px;background:#fff"></div>
<div style="position:absolute;left:695px;top:70px;width:144px;height:50px;background:#fff"></div>
<div style="position:absolute;left:839px;top:70px;width:144px;height:50px;background:#fff"></div>
<div style="position:absolute;left:0px;top:84.0px;width:55px;height:20px;text-align:center;font-size:15px;line-height:20px;color:#333">3</div>
<div style="position:absolute;left:57px;top:85px;width:348px;height:40px;font-size:14px;line-height:20px;color:#222;font-weight:bold;word-break:break-all;white-space:normal;letter-spacing:0.4px">（二）未按权责发生制原则确认的收入（填写<span style="font-size:15px">A10502</span><br><span style="font-size:15px">0)</span></div>
<div style="position:absolute;left:0px;top:120px;width:407px;height:34px;background:#f2f2f2"></div>
<div style="position:absolute;left:407px;top:120px;width:144px;height:34px;background:#fff"></div>
<div style="position:absolute;left:551px;top:120px;width:144px;height:34px;background:#fff"></div>
<div style="position:absolute;left:695px;top:120px;width:144px;height:34px;background:#fff"></div>
<div style="position:absolute;left:839px;top:120px;width:144px;height:34px;background:#fff"></div>
<div style="position:absolute;left:0px;top:126.0px;width:55px;height:20px;text-align:center;font-size:15px;line-height:20px;color:#333">4</div>
<div style="position:absolute;left:75px;top:126.5px;width:348px;height:20px;font-size:14px;line-height:20px;color:#222;font-weight:bold;white-space:nowrap;letter-spacing:0.4px">（三）投资收益（填写<span style="font-size:15px">A105030)</span></div>
<div style="position:absolute;left:0px;top:154px;width:407px;height:49px;background:#f2f2f2"></div>
<div style="position:absolute;left:407px;top:154px;width:144px;height:49px;background:#f2f2f2"></div>
<div style="position:absolute;left:407px;top:168.0px;width:140px;height:20px;text-align:right;font-size:15px;line-height:20px;color:#666">*</div>
<div style="position:absolute;left:551px;top:154px;width:144px;height:49px;background:#f2f2f2"></div>
<div style="position:absolute;left:551px;top:168.0px;width:140px;height:20px;text-align:right;font-size:15px;line-height:20px;color:#666">*</div>
<div style="position:absolute;left:695px;top:154px;width:144px;height:49px;background:#f2f2f2"></div>
<div style="position:absolute;left:695px;top:168.0px;width:140px;height:20px;text-align:right;font-size:15px;line-height:20px;color:#666">*</div>
<div style="position:absolute;left:839px;top:154px;width:144px;height:49px;background:#fff"></div>
<div style="position:absolute;left:0px;top:167.5px;width:55px;height:20px;text-align:center;font-size:15px;line-height:20px;color:#333">5</div>
<div style="position:absolute;left:57px;top:169px;width:348px;height:40px;font-size:14px;line-height:20px;color:#222;font-weight:bold;word-break:break-all;white-space:normal;letter-spacing:0.4px">（四）按权益法核算长期股权投资对初始投资成本调整确认收益</div>
<div style="position:absolute;left:0px;top:203px;width:407px;height:35px;background:#f2f2f2"></div>
<div style="position:absolute;left:407px;top:203px;width:144px;height:35px;background:#f2f2f2"></div>
<div style="position:absolute;left:407px;top:210.0px;width:140px;height:20px;text-align:right;font-size:15px;line-height:20px;color:#666">*</div>
<div style="position:absolute;left:551px;top:203px;width:144px;height:35px;background:#f2f2f2"></div>
<div style="position:absolute;left:551px;top:210.0px;width:140px;height:20px;text-align:right;font-size:15px;line-height:20px;color:#666">*</div>
<div style="position:absolute;left:695px;top:203px;width:144px;height:35px;background:#fff"></div>
<div style="position:absolute;left:839px;top:203px;width:144px;height:35px;background:#f2f2f2"></div>
<div style="position:absolute;left:839px;top:210.0px;width:140px;height:20px;text-align:right;font-size:15px;line-height:20px;color:#666">*</div>
<div style="position:absolute;left:0px;top:209.5px;width:55px;height:20px;text-align:center;font-size:15px;line-height:20px;color:#333">6</div>
<div style="position:absolute;left:75px;top:210.0px;width:348px;height:20px;font-size:14px;line-height:20px;color:#222;font-weight:bold;white-space:nowrap;letter-spacing:0.4px">（五）交易性金融资产初始投资调整</div>
<div style="position:absolute;left:0px;top:238px;width:407px;height:35px;background:#f2f2f2"></div>
<div style="position:absolute;left:407px;top:238px;width:144px;height:35px;background:#fff"></div>
<div style="position:absolute;left:551px;top:238px;width:144px;height:35px;background:#f2f2f2"></div>
<div style="position:absolute;left:551px;top:245.0px;width:140px;height:20px;text-align:right;font-size:15px;line-height:20px;color:#666">*</div>
<div style="position:absolute;left:695px;top:238px;width:144px;height:35px;background:#fff"></div>
<div style="position:absolute;left:839px;top:238px;width:144px;height:35px;background:#fff"></div>
<div style="position:absolute;left:0px;top:244.5px;width:55px;height:20px;text-align:center;font-size:15px;line-height:20px;color:#333">7</div>
<div style="position:absolute;left:75px;top:245.0px;width:348px;height:20px;font-size:14px;line-height:20px;color:#222;font-weight:bold;white-space:nowrap;letter-spacing:0.4px">（六）公允价值变动净损益</div>
<div style="position:absolute;left:0px;top:273px;width:407px;height:35px;background:#f2f2f2"></div>
<div style="position:absolute;left:407px;top:273px;width:144px;height:35px;background:#f2f2f2"></div>
<div style="position:absolute;left:407px;top:280.0px;width:140px;height:20px;text-align:right;font-size:15px;line-height:20px;color:#666">*</div>
<div style="position:absolute;left:551px;top:273px;width:144px;height:35px;background:#f2f2f2"></div>
<div style="position:absolute;left:551px;top:280.0px;width:140px;height:20px;text-align:right;font-size:15px;line-height:20px;color:#666">*</div>
<div style="position:absolute;left:695px;top:273px;width:144px;height:35px;background:#fff"></div>
<div style="position:absolute;left:839px;top:273px;width:144px;height:35px;background:#fff"></div>
<div style="position:absolute;left:0px;top:279.5px;width:55px;height:20px;text-align:center;font-size:15px;line-height:20px;color:#333">8</div>
<div style="position:absolute;left:75px;top:280.0px;width:348px;height:20px;font-size:14px;line-height:20px;color:#222;font-weight:bold;white-space:nowrap;letter-spacing:0.4px">（七）不征税收入</div>
<div style="position:absolute;left:0px;top:308px;width:407px;height:35px;background:#f2f2f2"></div>
<div style="position:absolute;left:407px;top:308px;width:144px;height:35px;background:#f2f2f2"></div>
<div style="position:absolute;left:407px;top:315.0px;width:140px;height:20px;text-align:right;font-size:15px;line-height:20px;color:#666">*</div>
<div style="position:absolute;left:551px;top:308px;width:144px;height:35px;background:#f2f2f2"></div>
<div style="position:absolute;left:551px;top:315.0px;width:140px;height:20px;text-align:right;font-size:15px;line-height:20px;color:#666">*</div>
<div style="position:absolute;left:695px;top:308px;width:144px;height:35px;background:#fff"></div>
<div style="position:absolute;left:839px;top:308px;width:144px;height:35px;background:#fff"></div>
<div style="position:absolute;left:0px;top:314.5px;width:55px;height:20px;text-align:center;font-size:15px;line-height:20px;color:#333">9</div>
<div style="position:absolute;left:101px;top:315.0px;width:348px;height:20px;font-size:14px;line-height:20px;color:#222;font-weight:bold;white-space:nowrap;letter-spacing:0.4px">其中：专项用途财政性资金（填写<span style="font-size:15px">A105040)</span></div>
<div style="position:absolute;left:0px;top:343px;width:407px;height:35px;background:#f2f2f2"></div>
<div style="position:absolute;left:407px;top:343px;width:144px;height:35px;background:#fff"></div>
<div style="position:absolute;left:551px;top:343px;width:144px;height:35px;background:#fff"></div>
<div style="position:absolute;left:695px;top:343px;width:144px;height:35px;background:#fff"></div>
<div style="position:absolute;left:839px;top:343px;width:144px;height:35px;background:#fff"></div>
<div style="position:absolute;left:0px;top:349.5px;width:55px;height:20px;text-align:center;font-size:15px;line-height:20px;color:#333">10</div>
<div style="position:absolute;left:75px;top:350.0px;width:348px;height:20px;font-size:14px;line-height:20px;color:#222;font-weight:bold;white-space:nowrap;letter-spacing:0.4px">（八）销售折扣、折让和退回</div>
<div style="position:absolute;left:0px;top:-2px;width:985px;height:4px;background:#fff"></div>
<div style="position:absolute;left:0px;top:33px;width:985px;height:4px;background:#fff"></div>
<div style="position:absolute;left:0px;top:68px;width:985px;height:4px;background:#fff"></div>
<div style="position:absolute;left:0px;top:118px;width:985px;height:4px;background:#fff"></div>
<div style="position:absolute;left:0px;top:152px;width:985px;height:4px;background:#fff"></div>
<div style="position:absolute;left:0px;top:201px;width:985px;height:4px;background:#fff"></div>
<div style="position:absolute;left:0px;top:236px;width:985px;height:4px;background:#fff"></div>
<div style="position:absolute;left:0px;top:271px;width:985px;height:4px;background:#fff"></div>
<div style="position:absolute;left:0px;top:306px;width:985px;height:4px;background:#fff"></div>
<div style="position:absolute;left:0px;top:341px;width:985px;height:4px;background:#fff"></div>
<div style="position:absolute;left:0px;top:376px;width:985px;height:4px;background:#fff"></div>
<div style="position:absolute;left:53px;top:0px;width:4px;height:360px;background:#fff"></div>
<div style="position:absolute;left:405px;top:0px;width:4px;height:360px;background:#fff"></div>
<div style="position:absolute;left:549px;top:0px;width:4px;height:360px;background:#fff"></div>
<div style="position:absolute;left:693px;top:0px;width:4px;height:360px;background:#fff"></div>
<div style="position:absolute;left:837px;top:0px;width:4px;height:360px;background:#fff"></div>
<div style="position:absolute;left:981px;top:0px;width:4px;height:360px;background:#fff"></div>
<div style="position:absolute;left:0px;top:-1px;width:984px;height:1px;background:#8a8a8a"></div>
<div style="position:absolute;left:0px;top:0px;width:984px;height:1px;background:#111"></div>
<div style="position:absolute;left:0px;top:34px;width:984px;height:1px;background:#8a8a8a"></div>
<div style="position:absolute;left:0px;top:35px;width:984px;height:1px;background:#111"></div>
<div style="position:absolute;left:0px;top:69px;width:984px;height:1px;background:#8a8a8a"></div>
<div style="position:absolute;left:0px;top:70px;width:984px;height:1px;background:#111"></div>
<div style="position:absolute;left:0px;top:119px;width:984px;height:1px;background:#8a8a8a"></div>
<div style="position:absolute;left:0px;top:120px;width:984px;height:1px;background:#111"></div>
<div style="position:absolute;left:0px;top:153px;width:984px;height:1px;background:#8a8a8a"></div>
<div style="position:absolute;left:0px;top:154px;width:984px;height:1px;background:#111"></div>
<div style="position:absolute;left:0px;top:202px;width:984px;height:1px;background:#8a8a8a"></div>
<div style="position:absolute;left:0px;top:203px;width:984px;height:1px;background:#111"></div>
<div style="position:absolute;left:0px;top:237px;width:984px;height:1px;background:#8a8a8a"></div>
<div style="position:absolute;left:0px;top:238px;width:984px;height:1px;background:#111"></div>
<div style="position:absolute;left:0px;top:272px;width:984px;height:1px;background:#8a8a8a"></div>
<div style="position:absolute;left:0px;top:273px;width:984px;height:1px;background:#111"></div>
<div style="position:absolute;left:0px;top:307px;width:984px;height:1px;background:#8a8a8a"></div>
<div style="position:absolute;left:0px;top:308px;width:984px;height:1px;background:#111"></div>
<div style="position:absolute;left:0px;top:342px;width:984px;height:1px;background:#8a8a8a"></div>
<div style="position:absolute;left:0px;top:343px;width:984px;height:1px;background:#111"></div>
<div style="position:absolute;left:0px;top:377px;width:984px;height:1px;background:#8a8a8a"></div>
<div style="position:absolute;left:0px;top:378px;width:984px;height:1px;background:#111"></div>
<div style="position:absolute;left:54px;top:0px;width:1px;height:360px;background:#8a8a8a"></div>
<div style="position:absolute;left:55px;top:0px;width:1px;height:360px;background:#111"></div>
<div style="position:absolute;left:406px;top:0px;width:1px;height:360px;background:#8a8a8a"></div>
<div style="position:absolute;left:407px;top:0px;width:1px;height:360px;background:#111"></div>
<div style="position:absolute;left:550px;top:0px;width:1px;height:360px;background:#8a8a8a"></div>
<div style="position:absolute;left:551px;top:0px;width:1px;height:360px;background:#111"></div>
<div style="position:absolute;left:694px;top:0px;width:1px;height:360px;background:#8a8a8a"></div>
<div style="position:absolute;left:695px;top:0px;width:1px;height:360px;background:#111"></div>
<div style="position:absolute;left:838px;top:0px;width:1px;height:360px;background:#8a8a8a"></div>
<div style="position:absolute;left:839px;top:0px;width:1px;height:360px;background:#111"></div>
<div style="position:absolute;left:982px;top:0px;width:1px;height:360px;background:#8a8a8a"></div>
<div style="position:absolute;left:983px;top:0px;width:1px;height:360px;background:#111"></div>
</div>
<div style="position:absolute;left:571px;top:314px;width:1px;height:64px;background:#3a6a72"></div>
<div style="position:absolute;left:572px;top:314px;width:1px;height:64px;background:#111"></div>
<div style="position:absolute;left:923px;top:314px;width:1px;height:64px;background:#3a6a72"></div>
<div style="position:absolute;left:924px;top:314px;width:1px;height:64px;background:#111"></div>
<div style="position:absolute;left:1067px;top:314px;width:1px;height:64px;background:#3a6a72"></div>
<div style="position:absolute;left:1068px;top:314px;width:1px;height:64px;background:#111"></div>
<div style="position:absolute;left:1211px;top:314px;width:1px;height:64px;background:#3a6a72"></div>
<div style="position:absolute;left:1212px;top:314px;width:1px;height:64px;background:#111"></div>
<div style="position:absolute;left:1355px;top:314px;width:1px;height:64px;background:#3a6a72"></div>
<div style="position:absolute;left:1356px;top:314px;width:1px;height:64px;background:#111"></div>
<div style="position:absolute;left:1499px;top:314px;width:1px;height:64px;background:#3a6a72"></div>
<div style="position:absolute;left:1500px;top:314px;width:1px;height:64px;background:#111"></div>
<div style="position:absolute;left:924px;top:343px;width:577px;height:1px;background:#3a6a72"></div>
<div style="position:absolute;left:924px;top:344px;width:577px;height:1px;background:#111"></div>
<div style="position:absolute;left:517px;top:377px;width:984px;height:1px;background:#555"></div>
<div style="position:absolute;left:517px;top:378px;width:984px;height:1px;background:#111"></div>
<div style="position:absolute;left:1799px;top:195px;width:1px;height:544px;background:#a8a8a8"></div>
<div style="position:absolute;left:1800px;top:196px;width:25px;height:542px;background:#f0f0f0"></div>
<div style="position:absolute;left:1825px;top:195px;width:1px;height:578px;background:#b4b4b4"></div>
<div style="position:absolute;left:1803px;top:214px;width:18px;height:507px;background:#d9d9d9"></div>
<div style="position:absolute;left:1803px;top:196px;width:16px;height:16px;background:#fff;border:1px solid #a8a8a8"></div>
<svg style="position:absolute;left:1807px;top:201px" width="10" height="7" viewBox="0 0 10 7"><path d="M0 6 L5 0.5 L10 6 Z" fill="#606060"/></svg>
<div style="position:absolute;left:1803px;top:213px;width:16px;height:121px;background:#fff;border:1px solid #a8a8a8"></div>
<div style="position:absolute;left:1803px;top:721px;width:16px;height:15px;background:#fff;border:1px solid #a8a8a8;border-radius:0 0 2px 2px"></div>
<svg style="position:absolute;left:1807px;top:727px" width="10" height="6" viewBox="0 0 10 6"><path d="M0 0 L5 5.5 L10 0 Z" fill="#606060"/></svg>
<div style="position:absolute;left:469px;top:738px;width:1356px;height:34px;background:#f0f0f0"></div>
<div style="position:absolute;left:469px;top:738px;width:665px;height:1px;background:#b4b4b4"></div>
<div style="position:absolute;left:1134px;top:739px;width:665px;height:1px;background:#b4b4b4"></div>
<svg style="position:absolute;left:499px;top:750px" width="7" height="11" viewBox="0 0 7 11"><path d="M6 0 V11 L0 5.5 Z" fill="#bdbdbd"/></svg>
<svg style="position:absolute;left:534px;top:750px" width="7" height="11" viewBox="0 0 7 11"><path d="M0 0 V11 L6 5.5 Z" fill="#bdbdbd"/></svg>
<div style="position:absolute;left:588px;top:738px;width:141px;height:28px;background:#fff;border-left:1px solid #b4b4b4;border-right:1px solid #b4b4b4;border-bottom:3px solid #227a45"></div>
<div style="position:absolute;left:589px;width:141px;text-align:center;top:741.00px;font-size:16px;line-height:22px;color:#227a45;font-weight:bold;white-space:nowrap;">纳税调整明细表</div>
<div style="position:absolute;left:1116px;top:750px;width:3px;height:3px;background:#555"></div>
<div style="position:absolute;left:1116px;top:755px;width:3px;height:3px;background:#555"></div>
<div style="position:absolute;left:1116px;top:760px;width:3px;height:3px;background:#555"></div>
<div style="position:absolute;left:1134px;top:747px;width:15px;height:15px;background:#fff;border:1px solid #a8a8a8;border-radius:2px"></div>
<svg style="position:absolute;left:1139px;top:750px" width="6" height="10" viewBox="0 0 6 10"><path d="M5.5 0 V10 L0 5 Z" fill="#666"/></svg>
<div style="position:absolute;left:1152px;top:747px;width:626px;height:15px;background:#fff;border:1px solid #a8a8a8;border-radius:2px"></div>
<div style="position:absolute;left:1781px;top:747px;width:16px;height:15px;background:#fff;border:1px solid #a8a8a8;border-radius:2px"></div>
<svg style="position:absolute;left:1787px;top:750px" width="6" height="10" viewBox="0 0 6 10"><path d="M0 0 V10 L5.5 5 Z" fill="#666"/></svg>
<div style="position:absolute;left:1847px;top:195px;width:72px;height:503px;background:#fff;box-shadow:-2px 3px 5px rgba(0,0,0,0.15)"></div>
<div style="position:absolute;left:1825px;top:195px;width:22px;height:36px;background:#e4e8f2;box-shadow:0 2px 4px rgba(0,0,0,0.15)"></div>
<svg style="position:absolute;left:1826px;top:206px" width="14" height="14" viewBox="0 0 14 14"><path d="M1.5 1 L7 6.8 L1.5 12.6 M6.5 1 L12 6.8 L6.5 12.6" stroke="#aab0bd" stroke-width="1.1" fill="none"/></svg>
<div style="position:absolute;left:1872px;top:205px;width:24px;height:24px;border-radius:50%;background:#40c6dc"></div>
<svg style="position:absolute;left:1876.5px;top:209px" width="15" height="15" viewBox="0 0 15 15"><path d="M1.5 7.5 L7.5 2.2 L13.5 7.5 M1.5 12.8 L7.5 7.5 L13.5 12.8" stroke="#fff" stroke-width="1.7" fill="none"/></svg>
<div style="position:absolute;left:1872px;top:669.5px;width:24px;height:24px;border-radius:50%;background:#40c6dc"></div>
<svg style="position:absolute;left:1876.5px;top:674px" width="15" height="15" viewBox="0 0 15 15"><path d="M1.5 2.2 L7.5 7.5 L13.5 2.2 M1.5 7.5 L7.5 12.8 L13.5 7.5" stroke="#fff" stroke-width="1.7" fill="none"/></svg>
<div style="position:absolute;left:1847px;width:72px;text-align:center;top:249.00px;font-size:14px;line-height:20px;color:#c0c4cc;font-weight:normal;white-space:nowrap;">2015年</div>
<div style="position:absolute;left:1847px;width:72px;text-align:center;top:293.00px;font-size:14px;line-height:20px;color:#c0c4cc;font-weight:normal;white-space:nowrap;">2016年</div>
<div style="position:absolute;left:1847px;width:72px;text-align:center;top:336.00px;font-size:14px;line-height:20px;color:#222;font-weight:normal;white-space:nowrap;">2017年</div>
<div style="position:absolute;left:1847px;width:72px;text-align:center;top:379.00px;font-size:14px;line-height:20px;color:#222;font-weight:normal;white-space:nowrap;">2018年</div>
<div style="position:absolute;left:1847px;width:72px;text-align:center;top:422.00px;font-size:14px;line-height:20px;color:#222;font-weight:normal;white-space:nowrap;">2019年</div>
<div style="position:absolute;left:1847px;width:72px;text-align:center;top:465.00px;font-size:14px;line-height:20px;color:#222;font-weight:normal;white-space:nowrap;">2020年</div>
<div style="position:absolute;left:1847px;width:72px;text-align:center;top:508.00px;font-size:14px;line-height:20px;color:#222;font-weight:normal;white-space:nowrap;">2021年</div>
<div style="position:absolute;left:1853px;top:548px;width:60px;height:29px;border-radius:15px;background:#40c6dc"></div>
<div style="position:absolute;left:1847px;width:72px;text-align:center;top:552.00px;font-size:14px;line-height:20px;color:#fff;font-weight:normal;white-space:nowrap;">2022年</div>
<div style="position:absolute;left:1847px;width:72px;text-align:center;top:594.50px;font-size:14px;line-height:20px;color:#222;font-weight:normal;white-space:nowrap;">2023年</div>
<div style="position:absolute;left:1847px;width:72px;text-align:center;top:638.00px;font-size:14px;line-height:20px;color:#c0c4cc;font-weight:normal;white-space:nowrap;">2024年</div>
</body></html>
